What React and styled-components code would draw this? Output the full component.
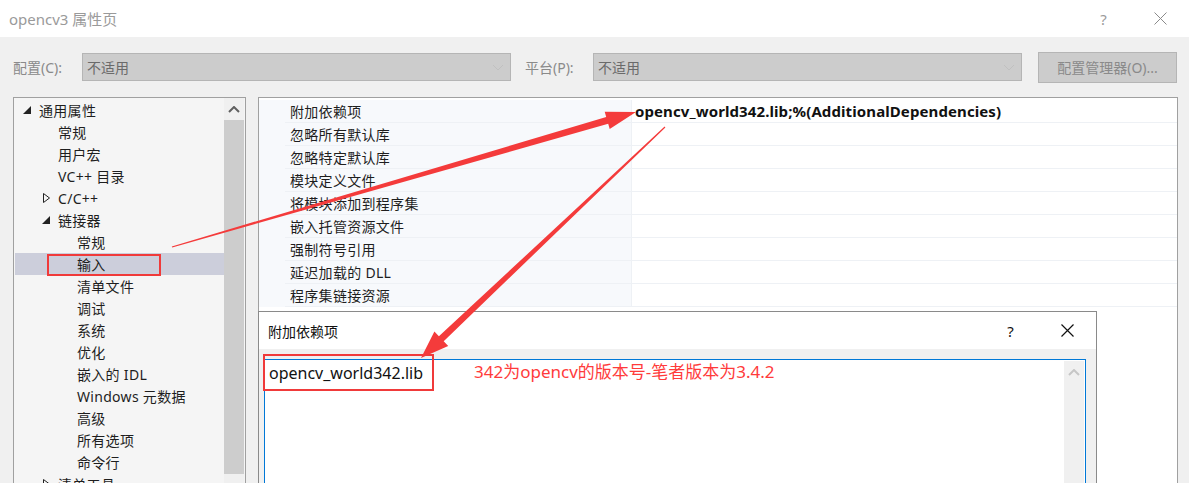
import styled, { createGlobalStyle } from "styled-components"

const Global = createGlobalStyle`
  html, body {
    margin: 0;
    padding: 0;
    background: #f0f0f0;
  }
  body {
    font-family: "Noto Sans", "Noto Sans CJK SC", sans-serif;
    overflow: hidden;
  }
`

const Page = styled.div`
  position: relative;
  width: 1189px;
  height: 483px;
  overflow: hidden;
  background: #f0f0f0;
`

const TitleBar = styled.div`
  height: 37px;
  background: #fff;
  display: flex;
  align-items: center;
  padding-left: 9px;
  box-sizing: border-box;
`

const Title = styled.div`
  flex: 1;
  font-size: 15px;
  color: #9a9a9a;
`

const TitleBtn = styled.div`
  width: 57px;
  height: 37px;
  display: flex;
  align-items: center;
  justify-content: center;
  font-size: 15px;
  color: ${(p) => p.color || "#9a9a9a"};
`

const ConfigRow = styled.div`
  height: 60px;
  display: flex;
  align-items: center;
  padding: 0 12px 0 13px;
  box-sizing: border-box;
  font-size: 14px;
  color: #8a8a8a;
`

const Label = styled.span`
  width: ${(p) => p.w}px;
`

const Select = styled.div`
  width: 429px;
  height: 28px;
  box-sizing: border-box;
  background: #cccccc;
  border: 1px solid #b5b5b5;
  display: flex;
  align-items: center;
  justify-content: space-between;
  padding: 0 6px 0 4px;
  color: #6a6a6a;
  margin-right: ${(p) => p.mr || 0}px;
`

const ManagerBtn = styled.div`
  width: 139px;
  height: 31px;
  box-sizing: border-box;
  background: #cccccc;
  border: 1px solid #b5b5b5;
  display: flex;
  align-items: center;
  justify-content: center;
  color: #8a8a8a;
  margin-left: auto;
`

const Main = styled.div`
  display: flex;
  padding-left: 13px;
  gap: 12px;
  height: 386px;
`

const Tree = styled.div`
  width: 233px;
  box-sizing: border-box;
  border: 1px solid #a0a0a0;
  border-bottom: none;
  background: #f5f5f5;
  display: flex;
`

const TreeList = styled.div`
  flex: 1;
  padding-top: 1px;
  padding-left: 1px;
`

const TreeRow = styled.div`
  height: 22px;
  display: flex;
  align-items: center;
  padding-left: ${(p) => 24 + p.level * 19}px;
  position: relative;
  font-size: 14px;
  letter-spacing: 0.3px;
  color: #1e1e1e;
  background: ${(p) => (p.selected ? "#cccedb" : "transparent")};
  white-space: nowrap;
`

const Toggle = styled.span`
  position: absolute;
  left: ${(p) => 8 + p.level * 19}px;
  top: 6px;
  width: 9px;
  height: 10px;
  display: flex;
`

const ScrollBar = styled.div`
  width: 20px;
  margin-right: 1px;
  background: #f0f0f0;
  display: flex;
  flex-direction: column;
  align-items: stretch;
`

const ScrollArrow = styled.div`
  height: 22px;
  display: flex;
  align-items: center;
  justify-content: center;
`

const Thumb = styled.div`
  flex: 1;
  background: #cdcdcd;
  margin-bottom: 9px;
`

const Grid = styled.div`
  width: 920px;
  box-sizing: border-box;
  border: 1px solid #a0a0a0;
  border-bottom: none;
  background: #fff;
  padding-top: 2px;
`

const GridRow = styled.div`
  display: flex;
  height: 23px;
  font-size: 14px;
  color: #1e1e1e;
`

const Margin = styled.div`
  width: 26px;
  background: #f7f9fc;
`

const NameCell = styled.div`
  width: 346px;
  background: #f7f9fc;
  border-bottom: 1px solid #eef1f5;
  box-sizing: border-box;
  padding-left: 5px;
  display: flex;
  align-items: center;
  letter-spacing: 0.3px;
`

const ValueCell = styled.div`
  flex: 1;
  border-left: 1px solid #eef1f5;
  border-bottom: 1px solid #eef1f5;
  box-sizing: border-box;
  padding-left: 3px;
  display: flex;
  align-items: center;
  font-size: 15px;
  font-weight: 700;
  letter-spacing: 0.1px;
  color: #111;
`

const Dialog = styled.div`
  position: absolute;
  left: 258px;
  top: 311px;
  width: 839px;
  height: 200px;
  box-sizing: border-box;
  border: 1px solid #8a8a8a;
  background: #f0f0f0;
`

const DialogHead = styled.div`
  height: 37px;
  background: #fff;
  display: flex;
  align-items: center;
  padding-left: 9px;
  font-size: 14px;
  color: #111;
`

const DialogTitle = styled.div`
  flex: 1;
`

const DialogBody = styled.div`
  padding: 10px 10px 0 5px;
`

const TextArea = styled.div`
  height: 140px;
  border: 1px solid #0078d7;
  background: #fff;
  display: flex;
  position: relative;
`

const TextContent = styled.div`
  flex: 1;
  padding: 2px 0 0 4px;
  font-size: 16px;
  color: #111;
  line-height: 22px;
`

const TextScroll = styled.div`
  width: 20px;
  margin: 1px 1px 0 0;
  background: #f0f0f0;
`

const RedBox = styled.div`
  position: absolute;
  left: ${(p) => p.x}px;
  top: ${(p) => p.y}px;
  width: ${(p) => p.w}px;
  height: ${(p) => p.h}px;
  border: 2px solid #f03a3a;
  box-sizing: border-box;
  pointer-events: none;
`

const Note = styled.div`
  position: absolute;
  left: 474px;
  top: 358px;
  font-size: 17px;
  color: #ff3b3b;
  white-space: nowrap;
`

const Overlay = styled.svg`
  position: absolute;
  left: 0;
  top: 0;
  pointer-events: none;
`

const Chevron = ({ color = "#c0c0c0", up }) => (
  <svg width="12" height="7" viewBox="0 0 12 7">
    <path
      d={up ? "M1 6 L6 1 L11 6" : "M1 1 L6 6 L11 1"}
      fill="none"
      stroke={color}
      strokeWidth={up ? 2 : 1}
    />
  </svg>
)

const Arrow = ({ open }) =>
  open ? (
    <svg width="9" height="10" viewBox="0 0 9 10">
      <path d="M8 1 L8 9 L0 9 Z" fill="#222" />
    </svg>
  ) : (
    <svg width="9" height="10" viewBox="0 0 9 10">
      <path d="M1.5 0.5 L7.5 5 L1.5 9.5 Z" fill="none" stroke="#222" />
    </svg>
  )

const treeItems = [
  { text: "通用属性", level: 0, toggle: "open" },
  { text: "常规", level: 1 },
  { text: "用户宏", level: 1 },
  { text: "VC++ 目录", level: 1 },
  { text: "C/C++", level: 1, toggle: "closed" },
  { text: "链接器", level: 1, toggle: "open" },
  { text: "常规", level: 2 },
  { text: "输入", level: 2, selected: true },
  { text: "清单文件", level: 2 },
  { text: "调试", level: 2 },
  { text: "系统", level: 2 },
  { text: "优化", level: 2 },
  { text: "嵌入的 IDL", level: 2 },
  { text: "Windows 元数据", level: 2 },
  { text: "高级", level: 2 },
  { text: "所有选项", level: 2 },
  { text: "命令行", level: 2 },
  { text: "清单工具", level: 1, toggle: "closed" },
]

const props = [
  ["附加依赖项", "opencv_world342.lib;%(AdditionalDependencies)"],
  ["忽略所有默认库", ""],
  ["忽略特定默认库", ""],
  ["模块定义文件", ""],
  ["将模块添加到程序集", ""],
  ["嵌入托管资源文件", ""],
  ["强制符号引用", ""],
  ["延迟加载的 DLL", ""],
  ["程序集链接资源", ""],
]

export default function App() {
  return (
    <Page>
      <Global />
      <TitleBar>
        <Title>opencv3 属性页</Title>
        <TitleBtn>?</TitleBtn>
        <TitleBtn>
          <svg width="13" height="13" viewBox="0 0 13 13">
            <path d="M0.5 0.5 L12.5 12.5 M12.5 0.5 L0.5 12.5" stroke="#8a8a8a" strokeWidth="1" />
          </svg>
        </TitleBtn>
      </TitleBar>

      <ConfigRow>
        <Label w={69}>配置(C):</Label>
        <Select mr={14}>
          <span>不适用</span>
          <Chevron />
        </Select>
        <Label w={68}>平台(P):</Label>
        <Select>
          <span>不适用</span>
          <Chevron />
        </Select>
        <ManagerBtn>配置管理器(O)...</ManagerBtn>
      </ConfigRow>

      <Main>
        <Tree>
          <TreeList>
            {treeItems.map((it, i) => (
              <TreeRow key={i} level={it.level} selected={it.selected}>
                {it.toggle && (
                  <Toggle level={it.level}>
                    <Arrow open={it.toggle === "open"} />
                  </Toggle>
                )}
                {it.text}
              </TreeRow>
            ))}
          </TreeList>
          <ScrollBar>
            <ScrollArrow>
              <Chevron up color="#606060" />
            </ScrollArrow>
            <Thumb />
          </ScrollBar>
        </Tree>

        <Grid>
          {props.map(([name, value], i) => (
            <GridRow key={i}>
              <Margin />
              <NameCell>{name}</NameCell>
              <ValueCell>{value}</ValueCell>
            </GridRow>
          ))}
        </Grid>
      </Main>

      <Dialog>
        <DialogHead>
          <DialogTitle>附加依赖项</DialogTitle>
          <TitleBtn color="#111">?</TitleBtn>
          <TitleBtn>
            <svg width="13" height="13" viewBox="0 0 13 13">
              <path d="M0.5 0.5 L12.5 12.5 M12.5 0.5 L0.5 12.5" stroke="#111" strokeWidth="1.2" />
            </svg>
          </TitleBtn>
        </DialogHead>
        <DialogBody>
          <TextArea>
            <TextContent>opencv_world342.lib</TextContent>
            <TextScroll>
              <ScrollArrow>
                <Chevron up color="#c6c6c6" />
              </ScrollArrow>
            </TextScroll>
          </TextArea>
        </DialogBody>
      </Dialog>

      <RedBox x={47} y={254} w={114} h={22} />
      <RedBox x={263} y={354} w={171} h={37} />
      <Note>342为opencv的版本号-笔者版本为3.4.2</Note>

      <Overlay width="1189" height="483" viewBox="0 0 1189 483">
        <polygon
          fill="#f43b3b"
          points="171.8,246.4 606.2,117.0 604.7,111.8 636,112 609.7,129.0 608.2,123.8 172.2,247.6"
        />
        <polygon
          fill="#f43b3b"
          points="665.4,127.4 443.7,341.3 448.2,346.1 421,358 434.4,331.5 438.9,336.3 664.6,126.6"
        />
      </Overlay>
    </Page>
  )
}
